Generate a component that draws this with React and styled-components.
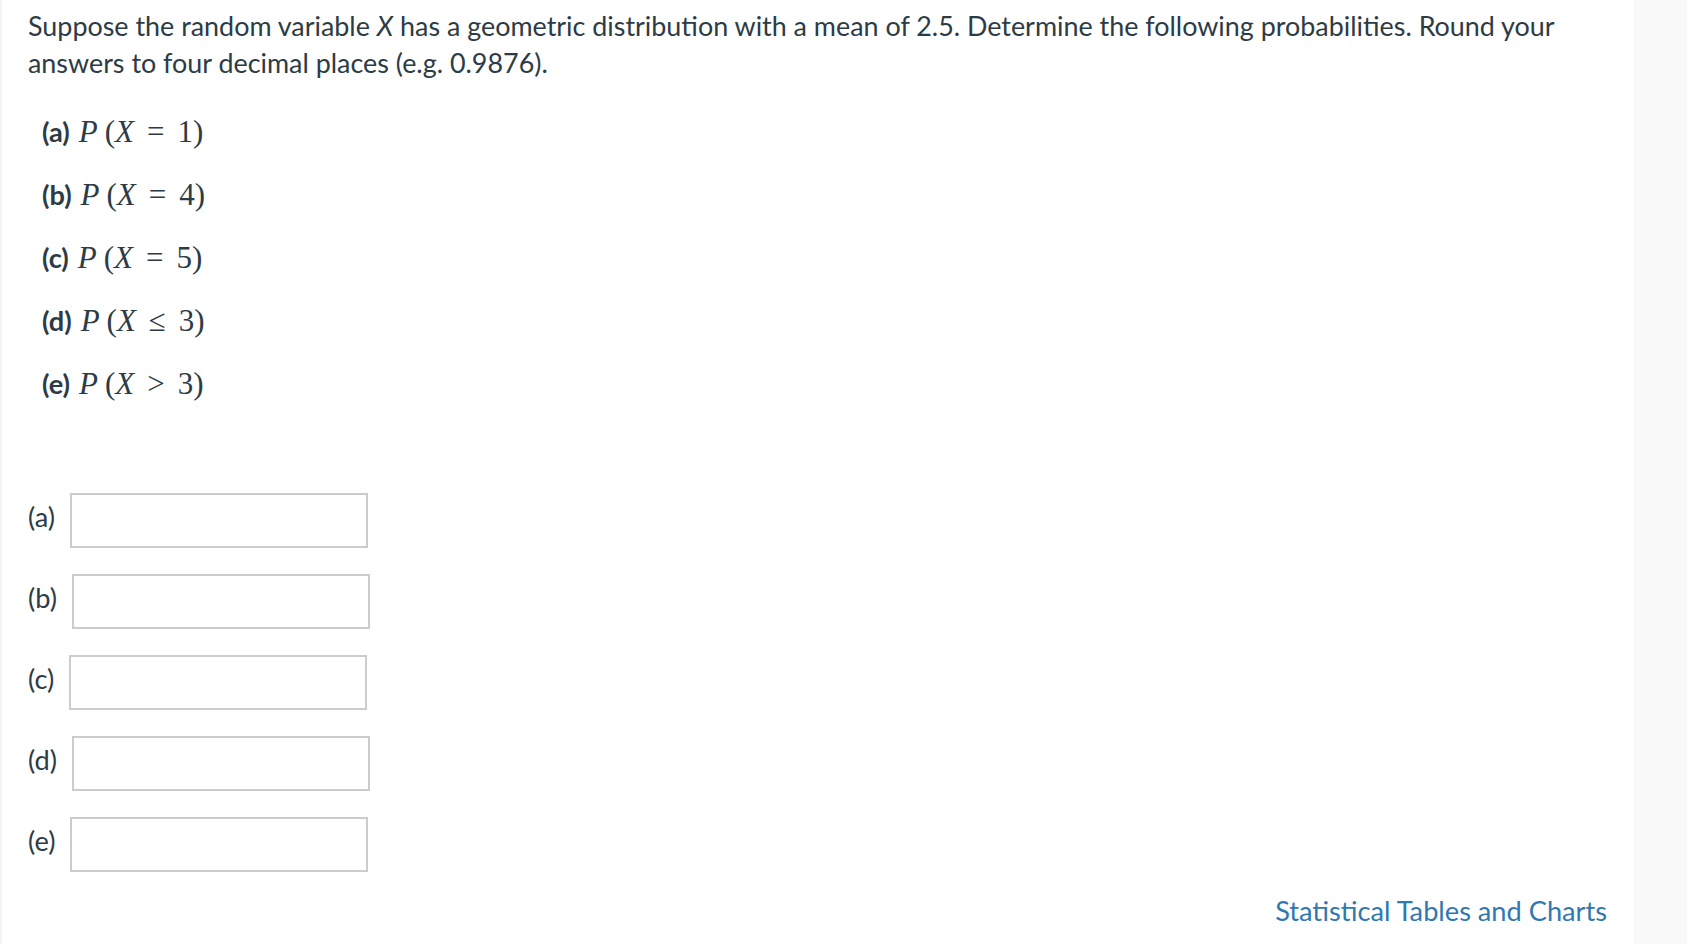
import React from 'react'
import styled, { createGlobalStyle } from 'styled-components'

const GlobalStyle = createGlobalStyle`
  html, body {
    margin: 0;
    padding: 0;
    background: #ffffff;
  }
  body {
    font-family: Lato, "Open Sans", sans-serif;
    color: #2d3b45;
  }
`

const parts = [
  { key: 'a', op: '=', value: '1' },
  { key: 'b', op: '=', value: '4' },
  { key: 'c', op: '=', value: '5' },
  { key: 'd', op: '≤', value: '3' },
  { key: 'e', op: '>', value: '3' },
]

const Page = styled.div`
  display: flex;
  min-height: 944px;
`

const Main = styled.main`
  flex: 1;
  border-left: 2px solid #f3f3f3;
  padding: 8px 27px 0 26px;
  display: flex;
  flex-direction: column;
`

const Side = styled.aside`
  width: 53px;
  background: #f9f9f9;
`

const Question = styled.p`
  margin: 0;
  font-size: 26.9px;
  line-height: 36.5px;

  i {
    font-style: italic;
  }
`

const ItemList = styled.ul`
  list-style: none;
  margin: 19px 0 0;
  padding: 0 0 0 14px;
`

const Item = styled.li`
  height: 63px;
  display: flex;
  align-items: center;
  gap: 9px;
  font-size: 27.2px;
`

const ItemLabel = styled.strong`
  font-weight: 700;
`

const Math = styled.span`
  font-family: "Liberation Serif", "Times New Roman", serif;
  font-size: 31px;
  white-space: pre;

  var {
    font-style: italic;
  }
`

const Fn = styled.var`
  margin-right: 7px;
`

const Rel = styled.span`
  display: inline-block;
  padding: 0 13px;
`

const Answers = styled.div`
  margin-top: 78px;
  display: flex;
  flex-direction: column;
  gap: 26px;
`

const AnswerRow = styled.label`
  display: flex;
  align-items: center;
  gap: 15px;
  font-size: 27.2px;
`

const AnswerLabel = styled.span`
  padding-bottom: 9px;
`

const AnswerInput = styled.input`
  box-sizing: border-box;
  width: 298px;
  height: 55px;
  border: 2px solid #cccccc;
  border-radius: 0;
  padding: 0 10px;
  font-family: Lato, sans-serif;
  font-size: 22px;
  color: #2d3b45;
  outline: none;
`

const Footer = styled.div`
  margin-top: 21px;
  display: flex;
  justify-content: flex-end;
`

const Link = styled.a`
  font-size: 27.2px;
  line-height: 36px;
  color: #2f78b0;
  text-decoration: none;
`

export default function App() {
  return (
    <>
      <GlobalStyle />
      <Page>
        <Main>
          <Question>
            Suppose the random variable <i>X</i> has a geometric distribution with a mean of 2.5.
            Determine the following probabilities. Round your answers to four decimal places (e.g.
            0.9876).
          </Question>

          <ItemList>
            {parts.map((p) => (
              <Item key={p.key}>
                <ItemLabel>({p.key})</ItemLabel>
                <Math>
                  <Fn>P</Fn>(<var>X</var>
                  <Rel>{p.op}</Rel>
                  {p.value})
                </Math>
              </Item>
            ))}
          </ItemList>

          <Answers>
            {parts.map((p) => (
              <AnswerRow key={p.key}>
                <AnswerLabel>({p.key})</AnswerLabel>
                <AnswerInput type="text" aria-label={`answer ${p.key}`} />
              </AnswerRow>
            ))}
          </Answers>

          <Footer>
            <Link href="#">Statistical Tables and Charts</Link>
          </Footer>
        </Main>
        <Side />
      </Page>
    </>
  )
}
